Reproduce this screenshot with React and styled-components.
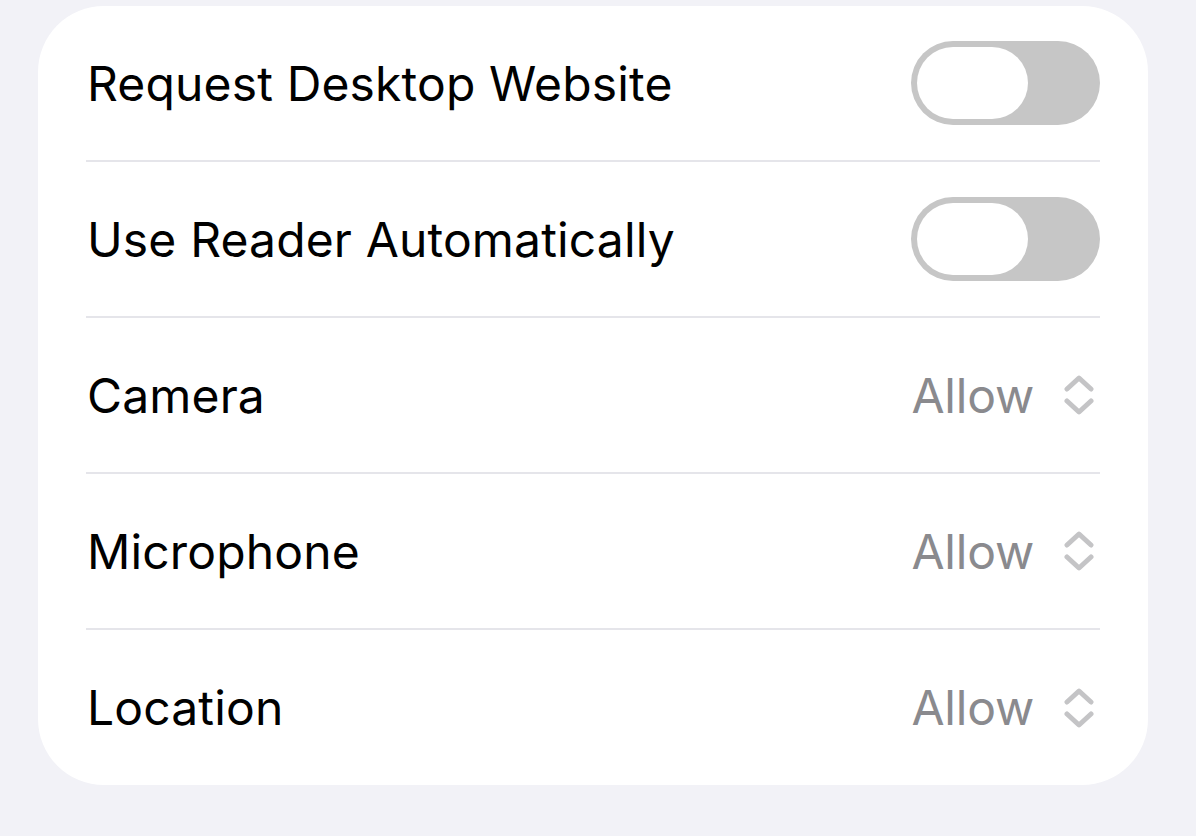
import styled, { createGlobalStyle } from "styled-components";

const GlobalStyle = createGlobalStyle`
  html, body {
    margin: 0;
    padding: 0;
    background: #f2f2f7;
  }
  body {
    font-family: Inter, "Noto Sans", "Liberation Sans", sans-serif;
    -webkit-font-smoothing: antialiased;
  }
`;

const Page = styled.div`
  width: 1196px;
  height: 836px;
  box-sizing: border-box;
  padding: 6px 48px 0 38px;
  background: #f2f2f7;
  overflow: hidden;
`;

const Card = styled.div`
  background: #ffffff;
  border-radius: 66px;
  display: flex;
  flex-direction: column;
  padding: 0 48px 0 48px;
`;

const Row = styled.div`
  display: flex;
  align-items: center;
  justify-content: space-between;
  height: ${p => (p.last ? "155px" : "154px")};
  border-bottom: ${p => (p.last ? "none" : "2px solid #e5e5ea")};
`;

const Label = styled.span`
  font-size: 48px;
  color: #000000;
  letter-spacing: 0.15px;
  margin-left: 1px;
`;

const Toggle = styled.div`
  width: 189px;
  height: 84px;
  border-radius: 42px;
  background: #c6c6c6;
  box-sizing: border-box;
  padding: 6px;
  display: flex;
  align-items: center;
`;

const Knob = styled.div`
  width: 111px;
  height: 72px;
  border-radius: 36px;
  background: #ffffff;
`;

const Picker = styled.div`
  display: flex;
  align-items: center;
  gap: 30px;
  margin-right: 6px;
`;

const Value = styled.span`
  font-size: 48px;
  color: #8a8a8e;
  letter-spacing: -0.2px;
`;

const Chevrons = () => (
  <svg width="30" height="44" viewBox="0 0 30 44" fill="none">
    <path
      d="M3 16 L15 5 L27 16 M3 28 L15 39 L27 28"
      stroke="#c4c4c6"
      strokeWidth="5"
      strokeLinecap="round"
      strokeLinejoin="round"
    />
  </svg>
);

const toggles = ["Request Desktop Website", "Use Reader Automatically"];
const permissions = ["Camera", "Microphone", "Location"];

export default function App() {
  return (
    <>
      <GlobalStyle />
      <Page>
        <Card>
          {toggles.map(t => (
            <Row key={t}>
              <Label>{t}</Label>
              <Toggle>
                <Knob />
              </Toggle>
            </Row>
          ))}
          {permissions.map((p, i) => (
            <Row key={p} last={i === permissions.length - 1}>
              <Label>{p}</Label>
              <Picker>
                <Value>Allow</Value>
                <Chevrons />
              </Picker>
            </Row>
          ))}
        </Card>
      </Page>
    </>
  );
}
